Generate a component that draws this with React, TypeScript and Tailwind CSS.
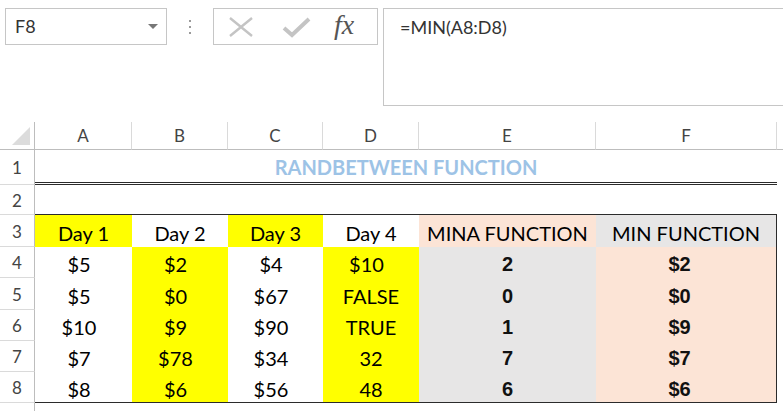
import React from "react";

const cellFont = "font-['Lato',_'Open_Sans',_sans-serif]";

const dataRows: string[][] = [
  ["$5", "$2", "$4", "$10", "2", "$2"],
  ["$5", "$0", "$67", "FALSE", "0", "$0"],
  ["$10", "$9", "$90", "TRUE", "1", "$9"],
  ["$7", "$78", "$34", "32", "7", "$7"],
  ["$8", "$6", "$56", "48", "6", "$6"],
];

const dataBg = ["bg-white", "bg-[#ffff00]", "bg-white", "bg-[#ffff00]", "bg-[#e7e6e6]", "bg-[#fce4d6]"];
const headBg = ["bg-[#ffff00]", "bg-white", "bg-[#ffff00]", "bg-white", "bg-[#fce4d6]", "bg-[#e7e6e6]"];
const heads = ["Day 1", "Day 2", "Day 3", "Day 4", "MINA FUNCTION", "MIN FUNCTION"];
const rowH = ["h-[31px]", "h-[32px]", "h-[31px]", "h-[31px]", "h-[31px]"];

function RowHead({ n, h }: { n: string; h: string }) {
  return (
    <div
      className={`${h} flex items-center justify-center border-r border-b border-r-[#bdbdbd] border-b-[#dadada] text-[17px] text-[#444] pt-[2px] ${cellFont}`}
    >
      {n}
    </div>
  );
}

export default function App() {
  return (
    <div className="w-[783px] h-[411px] overflow-hidden bg-white">
      {/* formula bar */}
      <div className={`h-[122px] flex items-start pt-[8px] ${cellFont}`}>
        <div className="ml-[5px] w-[162px] h-[37px] shrink-0 border border-[#c6c6c6] flex items-center justify-between pl-[9px] pr-[8px]">
          <span className="text-[18px] text-[#333]">F8</span>
          <svg width="10" height="6" viewBox="0 0 10 6">
            <polygon points="0,0 10,0 5,5" fill="#777" />
          </svg>
        </div>
        <div className="w-[46px] h-[37px] shrink-0 flex flex-col items-center justify-center gap-[4px]">
          <div className="w-[2px] h-[2px] bg-[#9a9a9a]" />
          <div className="w-[2px] h-[2px] bg-[#9a9a9a]" />
          <div className="w-[2px] h-[2px] bg-[#9a9a9a]" />
        </div>
        <div className="w-[165px] h-[37px] shrink-0 border border-[#c6c6c6] flex items-center pl-[14px]">
          <svg width="26" height="22" viewBox="0 0 26 22">
            <path d="M2 2 L24 20 M24 2 L2 20" stroke="#c4c4c4" strokeWidth="2.4" fill="none" />
          </svg>
          <svg width="30" height="22" viewBox="0 0 30 22" className="ml-[28px]">
            <path d="M2 12 L10 19 L27 3" stroke="#c4c4c4" strokeWidth="4" fill="none" strokeLinejoin="miter" />
          </svg>
          <span className="ml-[22px] font-['Liberation_Serif',_serif] italic text-[28px] leading-none text-[#555] -mt-[3px]">
            fx
          </span>
        </div>
        <div className="ml-[5px] w-[420px] h-[98px] shrink-0 border border-[#c6c6c6] pl-[16px] pt-[7px]">
          <span className="text-[18px] leading-[22px] text-[#333]">=MIN(A8:D8)</span>
        </div>
      </div>

      {/* sheet */}
      <div className={`grid grid-cols-[35px_97px_96px_95px_96px_177px_181px_6px] ${cellFont}`}>
        {/* column headers */}
        <div className="h-[28px] border-r border-b border-r-[#bdbdbd] border-b-[#bdbdbd] flex items-end justify-end pr-[4px] pb-[4px]">
          <svg width="18" height="18" viewBox="0 0 18 18">
            <polygon points="18,0 18,18 0,18" fill="#dcdcdc" />
          </svg>
        </div>
        {["A", "B", "C", "D", "E", "F"].map((c) => (
          <div
            key={c}
            className="h-[28px] border-r border-b border-r-[#dadada] border-b-[#bdbdbd] flex items-center justify-center text-[17px] text-[#444]"
          >
            {c}
          </div>
        ))}
        <div className="h-[28px] border-b border-b-[#bdbdbd]" />

        {/* row 1 */}
        <RowHead n="1" h="h-[35px]" />
        <div className="col-span-6 h-[35px] border-b-[3px] border-double border-b-[#2b2b2b] flex items-center justify-center pt-[1px] text-[20px] font-bold text-[#9dc3e6]">
          RANDBETWEEN FUNCTION
        </div>
        <div className="h-[35px]" />

        {/* row 2 */}
        <RowHead n="2" h="h-[30px]" />
        <div className="col-span-6 h-[30px] border-b border-b-[#2b2b2b]" />
        <div className="h-[30px]" />

        {/* row 3 */}
        <RowHead n="3" h="h-[32px]" />
        {heads.map((t, i) => (
          <div
            key={t}
            className={`h-[32px] ${headBg[i]} flex items-center justify-center pt-[3px] text-[20px] text-black ${
              i === 5 ? "border-r border-r-[#2b2b2b]" : ""
            }`}
          >
            {t}
          </div>
        ))}
        <div className="h-[32px]" />

        {/* rows 4-8 */}
        {dataRows.map((r, ri) => (
          <React.Fragment key={ri}>
            <RowHead n={String(ri + 4)} h={rowH[ri]} />
            {r.map((v, ci) => {
              const isLast = ri === 4;
              const bold = ci >= 4;
              const money = v.startsWith("$");
              const pr = money ? (ci === 5 ? "pr-[13px]" : "pr-[9px]") : "";
              return (
                <div
                  key={ci}
                  className={`${rowH[ri]} ${dataBg[ci]} flex items-center justify-center pt-[3px] ${pr} ${
                    bold
                      ? "font-['Liberation_Sans',_Arial,_sans-serif] font-bold text-[20px] text-[#111]"
                      : "text-[20px] text-black"
                  } ${isLast ? "border-b border-b-[#2b2b2b]" : ""} ${ci === 5 ? "border-r border-r-[#2b2b2b]" : ""}`}
                >
                  {v}
                </div>
              );
            })}
            <div className={rowH[ri]} />
          </React.Fragment>
        ))}

        {/* row 9 partial */}
        <div className="h-[8px] border-r border-r-[#bdbdbd]" />
        <div className="col-span-7 h-[8px]" />
      </div>
    </div>
  );
}
